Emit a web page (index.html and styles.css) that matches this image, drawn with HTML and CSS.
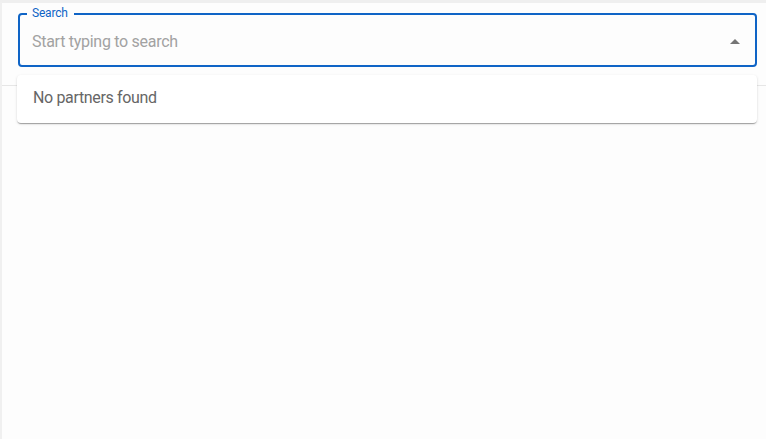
FILE: index.html
```html
<!DOCTYPE html>
<html lang="en">
<head>
<meta charset="utf-8">
<title>Search partners</title>
<link rel="stylesheet" href="styles.css">
</head>
<body>
<div class="page">
  <header class="header">
    <div class="field">
      <fieldset class="outline"><legend class="legend"><span>Search</span></legend></fieldset>
      <label class="label">Search</label>
      <input class="input" type="text" placeholder="Start typing to search">
      <svg class="arrow" width="24" height="24" viewBox="0 0 24 24"><path d="M7 14l5-5 5 5z" fill="#757575"/></svg>
    </div>
    <div class="panel">No partners found</div>
  </header>
</div>
</body>
</html>
```
FILE: styles.css
```css
html, body {
  margin: 0;
  height: 100%;
  background: #fdfdfd;
  font-family: Roboto, "Liberation Sans", sans-serif;
}
.page {
  height: 100%;
  box-sizing: border-box;
  border-top: 3px solid #efefef;
  border-left: 2px solid #f0f0f0;
}
.header {
  position: relative;
  padding: 10px 9px 18px 16px;
  border-bottom: 1px solid #e6e6e6;
}
.field {
  position: relative;
  height: 54px;
  display: flex;
  align-items: center;
}
.outline {
  position: absolute;
  inset: -5px 0 0 0;
  margin: 0;
  padding: 0 7px;
  border: 2px solid #0f64c6;
  border-radius: 4px;
  pointer-events: none;
}
.legend {
  padding: 0;
  font-size: 12px;
  visibility: hidden;
  height: 11px;
}
.legend span {
  padding: 0 5px;
}
.label {
  position: absolute;
  left: 14px;
  top: -8px;
  font-size: 12px;
  line-height: 16px;
  letter-spacing: -0.2px;
  color: #0f64c6;
}
.input {
  flex: 1;
  border: 0;
  outline: 0;
  background: transparent;
  font: 16px/24px Roboto, "Liberation Sans", sans-serif;
  letter-spacing: -0.28px;
  padding: 0 0 0 14px;
  margin-top: 4px;
  color: #333;
}
.input::placeholder {
  color: #a2a2a2;
  opacity: 1;
}
.arrow {
  margin-right: 10px;
  margin-top: 4px;
}
.panel {
  position: absolute;
  left: 15px;
  right: 9px;
  top: 72px;
  background: #fff;
  border-radius: 4px;
  box-shadow: 0 2px 1px -1px rgba(0,0,0,0.2), 0 1px 1px 0 rgba(0,0,0,0.14), 0 1px 3px 0 rgba(0,0,0,0.12);
  padding: 11px 16px 13px;
  font-size: 16px;
  line-height: 24px;
  letter-spacing: -0.35px;
  color: #666;
}
```
